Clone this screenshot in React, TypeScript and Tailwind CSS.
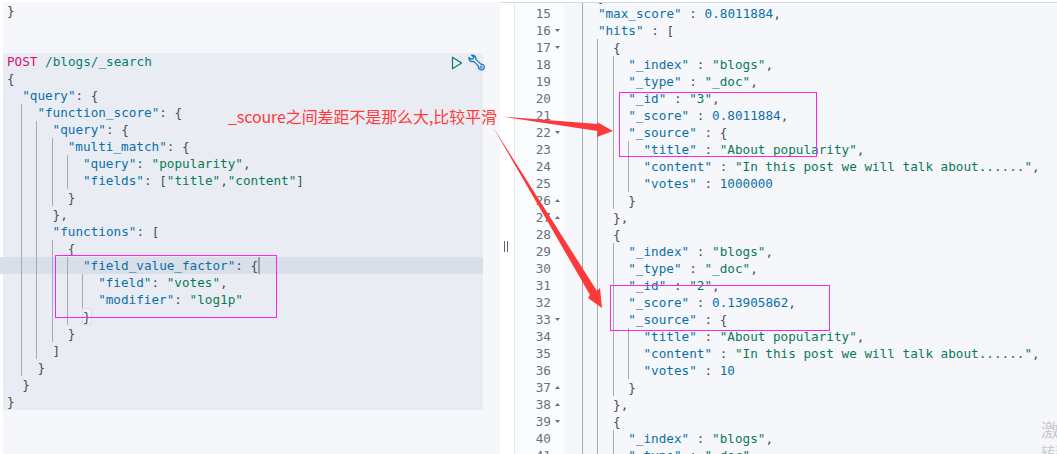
const MONO = "font-['DejaVu_Sans_Mono',monospace] text-[12.66px] leading-[17px] whitespace-pre";

type Fold = 'down' | 'up';

const REQUEST: [number, string][] = [
  [0, '{'],
  [2, '"query": {'],
  [4, '"function_score": {'],
  [6, '"query": {'],
  [8, '"multi_match": {'],
  [10, '"query": "popularity",'],
  [10, '"fields": ["title","content"]'],
  [8, '}'],
  [6, '},'],
  [6, '"functions": ['],
  [8, '{'],
  [10, '"field_value_factor": {'],
  [12, '"field": "votes",'],
  [12, '"modifier": "log1p"'],
  [10, '}'],
  [8, '}'],
  [6, ']'],
  [4, '}'],
  [2, '}'],
  [0, '}'],
];

const RESPONSE: [number, number, string, Fold?][] = [
  [14, 4, '},'],
  [15, 4, '"max_score" : 0.8011884,'],
  [16, 4, '"hits" : [', 'down'],
  [17, 6, '{', 'down'],
  [18, 8, '"_index" : "blogs",'],
  [19, 8, '"_type" : "_doc",'],
  [20, 8, '"_id" : "3",'],
  [21, 8, '"_score" : 0.8011884,'],
  [22, 8, '"_source" : {', 'down'],
  [23, 10, '"title" : "About popularity",'],
  [24, 10, '"content" : "In this post we will talk about......",'],
  [25, 10, '"votes" : 1000000'],
  [26, 8, '}', 'up'],
  [27, 6, '},', 'up'],
  [28, 6, '{'],
  [29, 8, '"_index" : "blogs",'],
  [30, 8, '"_type" : "_doc",'],
  [31, 8, '"_id" : "2",'],
  [32, 8, '"_score" : 0.13905862,'],
  [33, 8, '"_source" : {', 'down'],
  [34, 10, '"title" : "About popularity",'],
  [35, 10, '"content" : "In this post we will talk about......",'],
  [36, 10, '"votes" : 10'],
  [37, 8, '}', 'up'],
  [38, 6, '},', 'up'],
  [39, 6, '{', 'down'],
  [40, 8, '"_index" : "blogs",'],
  [41, 8, '"_type" : "_doc",'],
];

function Tokens({ text }: { text: string }) {
  const parts = text.match(/"[^"]*"(?=\s*:)|"[^"]*"|\d+(?:\.\d+)?|\s+|./g) ?? [];
  return (
    <>
      {parts.map((part, i) => {
        let color = 'text-[#4a4d57]';
        if (part.startsWith('"')) {
          const isKey = /^\s*:/.test(parts.slice(i + 1).join(''));
          color = isKey ? 'text-[#0a6fa8]' : 'text-[#0a7a55]';
        } else if (/^\d/.test(part)) {
          color = 'text-[#0a6fa8]';
        }
        return (
          <span key={i} className={color}>
            {part}
          </span>
        );
      })}
    </>
  );
}

function Indent({ indent }: { indent: number }) {
  const levels = Math.floor(indent / 2);
  return (
    <>
      {Array.from({ length: levels }, (_, i) => (
        <span
          key={i}
          className={i === 0 ? 'h-[17px] w-[15.2px] shrink-0' : 'h-[17px] w-[15.2px] shrink-0 border-l border-[#a4aab8]'}
        />
      ))}
    </>
  );
}

function RunIcon() {
  return (
    <svg width="12" height="14" viewBox="0 0 12 14" fill="none" className="mt-[3px]">
      <path d="M1.5 1.2 10.6 7 1.5 12.8Z" stroke="#017d73" strokeWidth="1.2" strokeLinejoin="round" />
    </svg>
  );
}

function WrenchIcon() {
  return (
    <svg width="17" height="17" viewBox="0 0 17 17" fill="none" className="mt-px">
      <path
        d="M3.6 1.2 5.9 3.3 4.9 5 3 5.3 1 3.4C.7 5.6 1.9 7.5 4 7.7c.8.1 1.3-.1 1.8-.3l4.6 4.7c-.1 1.8 1 3.6 2.8 3.8 1.9.1 3.2-1.3 3.1-2.9-.1-1.9-1.6-3.1-3.5-2.9L8 5.4c.2-2.3-1.6-4.5-4.4-4.2Z"
        stroke="#1878b8"
        strokeWidth="1.3"
        strokeLinejoin="round"
      />
      <circle cx="13.2" cy="13" r="1" stroke="#1878b8" strokeWidth="1" />
    </svg>
  );
}

function FoldMark({ fold }: { fold?: Fold }) {
  return (
    <span className="flex w-[13px] shrink-0 items-center justify-end pr-[4px]">
      {fold && (
        <svg width="5" height="3" viewBox="0 0 5 3">
          <path d={fold === 'down' ? 'M0 0H5L2.5 3Z' : 'M0 3H5L2.5 0Z'} fill="#69707d" />
        </svg>
      )}
    </span>
  );
}

function RequestLine({ indent, text, index }: { indent: number; text: string; index: number }) {
  const active = index === 11;
  const matched = index === 14;
  return (
    <div className={active ? '-ml-[3px] flex h-[17px] bg-[#d9dfe8] pl-[6px]' : 'flex h-[17px] pl-[3px]'}>
      <Indent indent={indent} />
      {matched ? (
        <span className="h-[17px] rounded-[2px] border border-[#d3dae6] bg-[#eef1f6] leading-[15px] text-[#4a4d57]">{'}'}</span>
      ) : (
        <span className="pl-px">
          <Tokens text={text} />
        </span>
      )}
      {active && <span className="h-[17px] w-[2px] bg-[#98a2b3]" />}
    </div>
  );
}

function Resizer() {
  return (
    <div className="flex w-[14px] shrink-0 justify-center gap-[1.5px] bg-white pr-[2px] pt-[238px]">
      <span className="h-[11px] w-px bg-[#5f6673]" />
      <span className="h-[11px] w-px bg-[#5f6673]" />
    </div>
  );
}

export default function App() {
  return (
    <div className={`relative h-[454px] w-[1057px] overflow-hidden bg-white ${MONO}`}>
      <div className="mt-[2px] h-px bg-[#d3dae6]" />
      <div className="flex h-[451px]">
        {/* request editor */}
        <div className="-mt-px w-[500px] shrink-0 bg-white pl-[3px]">
          <div className="h-full bg-[#f5f7fa]">
            <div className="h-[17px] pl-[4px]">
              <span className="text-[#4a4d57]">{'}'}</span>
            </div>
            <div className="mt-[34px] w-[480px] bg-[#e9edf3]">
              <div className="flex h-[17px] justify-between pl-[4px]">
                <span>
                  <span className="text-[#dd0a73]">POST</span>
                  <span className="text-[#017d73]"> /blogs/_search</span>
                </span>
                <span className="-mr-[2px] flex items-start gap-[5px]">
                  <RunIcon />
                  <WrenchIcon />
                </span>
              </div>
              {REQUEST.map(([indent, text], i) => (
                <RequestLine key={i} indent={indent} text={text} index={i} />
              ))}
            </div>
          </div>
        </div>

        <Resizer />

        {/* response viewer */}
        <div className="min-w-0 flex-1 overflow-hidden border-l border-[#e3e7ee] bg-[#f5f7fa]">
          <div className="-mt-[15px]">
            {RESPONSE.map(([num, indent, text, fold]) => (
              <div key={num} className="flex h-[17px]">
                <div className="flex w-[49px] shrink-0 justify-end bg-[#fbfcfd] text-[#69707d]">
                  <span>{num}</span>
                  <FoldMark fold={fold} />
                </div>
                <div className="flex pl-[3px]">
                  <Indent indent={indent} />
                  <span className="pl-[0.5px]">
                    <Tokens text={text} />
                  </span>
                </div>
              </div>
            ))}
          </div>
        </div>
      </div>

      {/* annotations drawn on top of the screenshot */}
      <div className="absolute left-[55px] top-[255px] h-[63px] w-[222px] border border-[#ff22ee]" />
      <div className="absolute left-[619px] top-[92px] h-[65px] w-[198px] border border-[#ff22ee]" />
      <div className="absolute left-[610px] top-[285px] h-[46px] w-[220px] border border-[#ff22ee]" />
      <span className="absolute left-[228px] top-[105px] font-['Noto_Sans_CJK_SC',sans-serif] text-[16px] leading-[22px] tracking-[-0.1px] text-[#ff3b3b]">
        _scoure之间差距不是那么大,比较平滑
      </span>
      <svg className="absolute left-0 top-0" width="1057" height="454" fill="#fc3a3a">
        <polygon points="502,116.5 598,124 597,122 613,131 597,137 597.5,131" />
        <polygon points="493,127 597,291 600,288 602,308 588,298 590,295" />
      </svg>
      <div className="absolute left-[1041px] top-[417px] font-['Noto_Sans_CJK_SC',sans-serif] text-[#c8cacf]">
        <div className="text-[18px] leading-[24px]">激活 Windows</div>
        <div className="text-[14px] leading-[20px]">转到"设置"以激活 Windows。</div>
      </div>
    </div>
  );
}
